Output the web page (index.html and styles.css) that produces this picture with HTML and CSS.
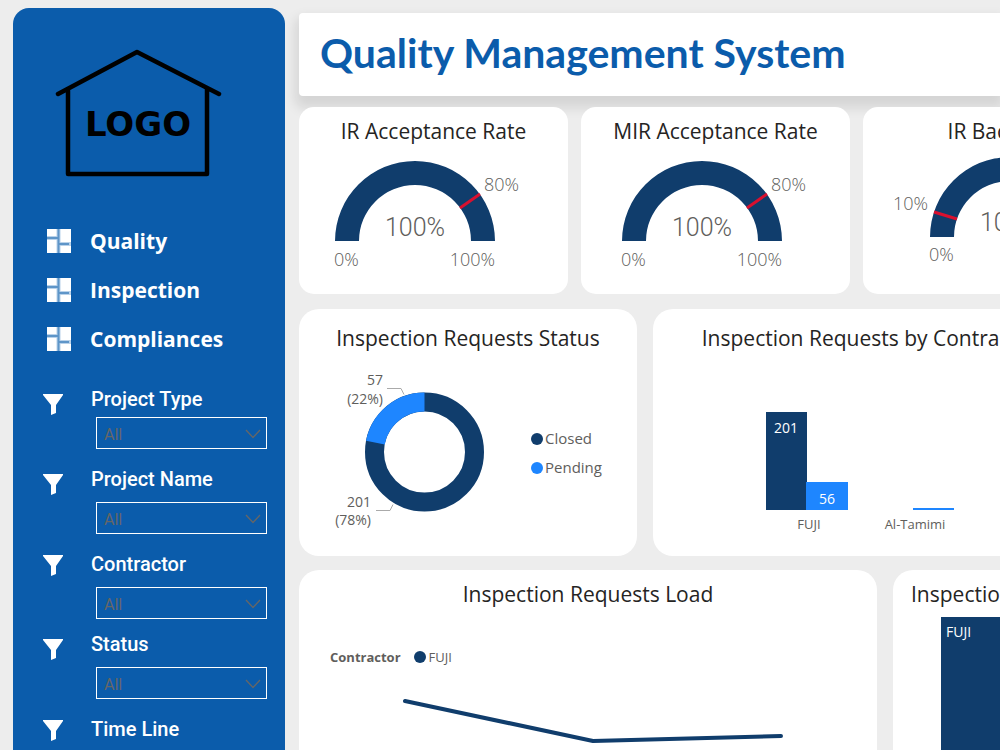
FILE: index.html
```html
<!DOCTYPE html>
<html lang="en">
<head>
<meta charset="UTF-8">
<meta name="viewport" content="width=device-width, initial-scale=1">
<title>Quality Management System</title>
<link rel="stylesheet" href="styles.css">
</head>
<body>

<!-- shared icons -->
<svg class="sprite" aria-hidden="true">
    <symbol id="icon-tiles" viewBox="0 0 24 24">
        <rect width="24" height="24" fill="#fff"/>
        <path d="M11.5 0v24M0 9h11.5M11.5 15H24" fill="none" stroke="#b9d2ea" stroke-width="4"/>
        <path d="M11.5 0v24M0 9h11.5M11.5 15H22" fill="none" stroke="#5e95c8" stroke-width="2"/>
    </symbol>
    <symbol id="icon-funnel" viewBox="0 0 20 21">
        <path d="M0 0h20v1l-7 10v8l-5 2V11L0 1z" fill="#fff"/>
    </symbol>
    <symbol id="icon-chevron" viewBox="0 0 16 10">
        <path d="M1 1l7 7.500 7-7.500" fill="none" stroke="#666" stroke-width="1.300"/>
    </symbol>
</svg>

<div class="dashboard">
    <aside class="sidebar">
        <svg class="logo" viewBox="0 0 168 128" role="img" aria-label="Logo">
            <path d="M3 45L82 3l82 42M13 40v85h139V40" fill="none" stroke="#000" stroke-width="4.500" stroke-linecap="round" stroke-linejoin="round"/>
            <text x="83" y="87" text-anchor="middle" class="logo-text">LOGO</text>
        </svg>

        <nav class="nav">
            <a href="#"><svg class="nav-icon"><use href="#icon-tiles"/></svg>Quality</a>
            <a href="#"><svg class="nav-icon"><use href="#icon-tiles"/></svg>Inspection</a>
            <a href="#"><svg class="nav-icon"><use href="#icon-tiles"/></svg>Compliances</a>
        </nav>

        <form class="filters">
            <div class="filter filter-tight filter-first">
                <svg class="funnel"><use href="#icon-funnel"/></svg>
                <label for="projectType">Project Type</label>
                <div class="select-box">
                    <select id="projectType"><option>All</option></select>
                    <svg class="chevron"><use href="#icon-chevron"/></svg>
                </div>
            </div>
            <div class="filter">
                <svg class="funnel"><use href="#icon-funnel"/></svg>
                <label for="projectName">Project Name</label>
                <div class="select-box">
                    <select id="projectName"><option>All</option></select>
                    <svg class="chevron"><use href="#icon-chevron"/></svg>
                </div>
            </div>
            <div class="filter filter-tight">
                <svg class="funnel funnel-high"><use href="#icon-funnel"/></svg>
                <label for="contractor">Contractor</label>
                <div class="select-box">
                    <select id="contractor"><option>All</option></select>
                    <svg class="chevron"><use href="#icon-chevron"/></svg>
                </div>
            </div>
            <div class="filter">
                <svg class="funnel"><use href="#icon-funnel"/></svg>
                <label for="status">Status</label>
                <div class="select-box">
                    <select id="status"><option>All</option></select>
                    <svg class="chevron"><use href="#icon-chevron"/></svg>
                </div>
            </div>
            <div class="filter">
                <svg class="funnel funnel-high"><use href="#icon-funnel"/></svg>
                <label for="timeLine">Time Line</label>
                <div class="select-box">
                    <select id="timeLine"><option>All</option></select>
                    <svg class="chevron"><use href="#icon-chevron"/></svg>
                </div>
            </div>
        </form>
    </aside>

    <main class="main">
        <header class="header">
            <h1>Quality Management System</h1>
        </header>

        <section class="row gauges">
            <div class="card gauge-card">
                <h2>IR Acceptance Rate</h2>
                <svg class="gauge" viewBox="0 0 269 148">
                    <path d="M36 95a80 80 0 0 1 160 0h-24a56 56 0 0 0-112 0z" class="navy"/>
                    <path d="M161 62l20-14" class="target"/>
                    <text x="185" y="45">80%</text>
                    <text x="116" y="90" text-anchor="middle" class="value">100%</text>
                    <text x="35" y="120">0%</text>
                    <text x="196" y="120" text-anchor="end">100%</text>
                </svg>
            </div>
            <div class="card gauge-card">
                <h2>MIR Acceptance Rate</h2>
                <svg class="gauge" viewBox="0 0 269 148">
                    <path d="M41 95a80 80 0 0 1 160 0h-24a56 56 0 0 0-112 0z" class="navy"/>
                    <path d="M166 62l20-14" class="target"/>
                    <text x="190" y="45">80%</text>
                    <text x="121" y="90" text-anchor="middle" class="value">100%</text>
                    <text x="40" y="120">0%</text>
                    <text x="201" y="120" text-anchor="end">100%</text>
                </svg>
            </div>
            <div class="card gauge-card">
                <h2>IR Backlog</h2>
                <svg class="gauge" viewBox="0 0 269 148">
                    <path d="M67 91a80 80 0 0 1 160 0h-24a56 56 0 0 0-112 0z" class="navy"/>
                    <path d="M71 66l23 7" class="target"/>
                    <text x="65" y="64" text-anchor="end">10%</text>
                    <text x="147" y="85" text-anchor="middle" class="value">100%</text>
                    <text x="66" y="115">0%</text>
                </svg>
            </div>
        </section>

        <section class="row requests">
            <div class="card status-card">
                <h2>Inspection Requests Status</h2>
                <div class="status-body">
                    <svg class="donut" viewBox="0 0 232 203">
                        <circle cx="125.500" cy="99" r="50" class="donut-ring" stroke="#103d6c"/>
                        <path d="M76.400 89.600A50 50 0 0 1 125.500 49" class="donut-ring" stroke="#1e86ff"/>
                        <path d="M88 35.500h14l3 6M77 157.500h14l3-6" fill="none" stroke="#aaa"/>
                        <text x="84" y="32" text-anchor="end">57</text>
                        <text x="84" y="51" text-anchor="end">(22%)</text>
                        <text x="72" y="154" text-anchor="end">201</text>
                        <text x="72" y="172" text-anchor="end">(78%)</text>
                    </svg>
                    <ul class="legend">
                        <li><span class="dot"></span>Closed</li>
                        <li><span class="dot dot-pending"></span>Pending</li>
                    </ul>
                </div>
            </div>
            <div class="card contractor-card">
                <h2>Inspection Requests by Contractor</h2>
                <svg class="bars" viewBox="0 0 426 203">
                    <rect x="113" y="59" width="41" height="98" class="navy"/>
                    <rect x="153" y="129" width="42" height="28" class="blue"/>
                    <rect x="260" y="155" width="41" height="2" class="blue"/>
                    <text x="133" y="80" text-anchor="middle" class="bar-value">201</text>
                    <text x="174" y="151" text-anchor="middle" class="bar-value">56</text>
                    <text x="156" y="176" text-anchor="middle">FUJI</text>
                    <text x="262" y="176" text-anchor="middle">Al-Tamimi</text>
                </svg>
            </div>
        </section>

        <section class="row loads">
            <div class="card load-card">
                <h2>Inspection Requests Load</h2>
                <div class="load-legend"><b>Contractor</b><span class="dot"></span>FUJI</div>
                <svg class="line" viewBox="0 0 577 160">
                    <path d="M106 34l188 40 188-5" fill="none" stroke="#103d6c" stroke-width="4" stroke-linecap="round" stroke-linejoin="round"/>
                </svg>
            </div>
            <div class="card tree-card">
                <h2>Inspection Requests</h2>
                <div class="tree">FUJI</div>
            </div>
        </section>
    </main>
</div>

</body>
</html>
```
FILE: styles.css
```css
* {
    box-sizing: border-box;
}
body {
    margin: 0;
    font-family: 'Open Sans', sans-serif;
    background-color: #ededed;
    color: #252423;
}
svg {
    display: block;
    flex: none;
}
.sprite {
    position: absolute;
    width: 0;
    height: 0;
}
.dashboard {
    display: flex;
    height: 100vh;
    padding: 8px 0 0 13px;
    gap: 14px;
    overflow: hidden;
}

/* sidebar */
.sidebar {
    flex: 0 0 272px;
    padding: 41px 18px 0 30px;
    background-color: #0b5cab;
    border-radius: 16px 16px 0 0;
    color: white;
    overflow: hidden;
}
.logo {
    width: 168px;
    height: 128px;
    margin-left: 12px;
}
.logo-text {
    font: bold 34px 'DejaVu Sans', sans-serif;
}
.nav {
    display: flex;
    flex-direction: column;
    gap: 19px;
    margin-top: 49px;
}
.nav a {
    display: flex;
    align-items: center;
    gap: 19px;
    padding-left: 4px;
    line-height: 30px;
    font-size: 21px;
    font-weight: bold;
    color: white;
    text-decoration: none;
}
.nav-icon {
    width: 24px;
    height: 24px;
}
.filters {
    margin-top: 33px;
}
.filter {
    display: grid;
    grid-template-columns: 20px 1fr;
    grid-template-rows: 24px 32px;
    column-gap: 28px;
    row-gap: 11px;
    height: 85px;
}
.filter-tight {
    height: 80px;
}
.filter-first {
    row-gap: 6px;
}
.funnel {
    width: 20px;
    height: 21px;
    margin-top: 7px;
}
.funnel-high {
    margin-top: 3px;
}
.filter label {
    font: 500 20px/24px Roboto, sans-serif;
}
.select-box {
    grid-column: 2;
    position: relative;
    margin-left: 5px;
}
.select-box select {
    width: 100%;
    height: 32px;
    padding: 2px 7px 0;
    border: 1px solid white;
    border-radius: 0;
    background: none;
    appearance: none;
    font: 16px Roboto, sans-serif;
    color: #666;
}
.chevron {
    position: absolute;
    right: 6px;
    top: 12px;
    width: 16px;
    height: 10px;
    pointer-events: none;
}

/* main area */
.main {
    flex: 1;
    min-width: 0;
}
.header {
    margin-top: 5px;
    padding: 0 21px 4px;
    background: white;
    border-radius: 4px 0 0 4px;
    box-shadow: 0 8px 12px 4px rgba(0, 0, 0, 0.1);
}
h1 {
    margin: 0;
    font: bold 41px/79px Lato, sans-serif;
    color: #0b5cab;
    white-space: nowrap;
}
.row {
    display: flex;
    position: relative;
}
.gauges {
    gap: 13px;
    margin-top: 11px;
}
.requests {
    gap: 16px;
    margin-top: 15px;
}
.loads {
    gap: 16px;
    margin-top: 14px;
}
.card {
    background: white;
    border-radius: 20px;
}
h2 {
    margin: 0;
    font-size: 21px;
    font-weight: 400;
    line-height: 30px;
    text-align: center;
    white-space: nowrap;
}
.gauge-card {
    flex: 1 0 269px;
    padding-top: 9px;
    border-radius: 15px;
}
.status-card {
    flex: 1 0 338px;
    padding-top: 14px;
}
.contractor-card {
    flex: 1 0 434px;
    padding-top: 14px;
}
.load-card {
    flex: 1 0 578px;
    padding-top: 9px;
}
.tree-card {
    flex: 1 0 320px;
    padding: 9px 18px 0;
}
.tree-card h2 {
    text-align: left;
}

/* charts */
.navy {
    fill: #103d6c;
}
.blue {
    fill: #1e86ff;
}
.gauge {
    width: 269px;
    height: 148px;
    font-size: 18px;
    font-weight: 300;
    fill: #605e5c;
}
.gauge .value {
    font: 300 25px Roboto, sans-serif;
}
.target {
    stroke: #d9102f;
    stroke-width: 3;
}
.status-body {
    display: flex;
}
.donut {
    width: 232px;
    height: 203px;
    font-size: 14px;
    fill: #605e5c;
}
.donut-ring {
    fill: none;
    stroke-width: 19;
}
.legend {
    margin: 71px 0 0;
    padding: 0;
    list-style: none;
    font-size: 15px;
    line-height: 29px;
    color: #605e5c;
}
.legend li {
    display: flex;
    align-items: center;
    gap: 2px;
}
.dot {
    width: 12px;
    height: 12px;
    border-radius: 50%;
    background: #103d6c;
}
.dot-pending {
    background: #1e86ff;
}
.bars {
    width: 426px;
    height: 203px;
    font-size: 13px;
    fill: #605e5c;
}
.bar-value {
    font-size: 14px;
    fill: white;
}
.load-legend {
    display: flex;
    align-items: center;
    gap: 3px;
    margin: 38px 0 0 31px;
    font-size: 13px;
    line-height: 20px;
    color: #605e5c;
}
.load-legend b {
    margin-right: 10px;
}
.line {
    width: 577px;
    height: 160px;
}
.tree {
    height: 220px;
    margin: 8px 0 0 30px;
    padding: 5px;
    background: #103d6c;
    font-size: 14px;
    line-height: 20px;
    color: white;
}
```
